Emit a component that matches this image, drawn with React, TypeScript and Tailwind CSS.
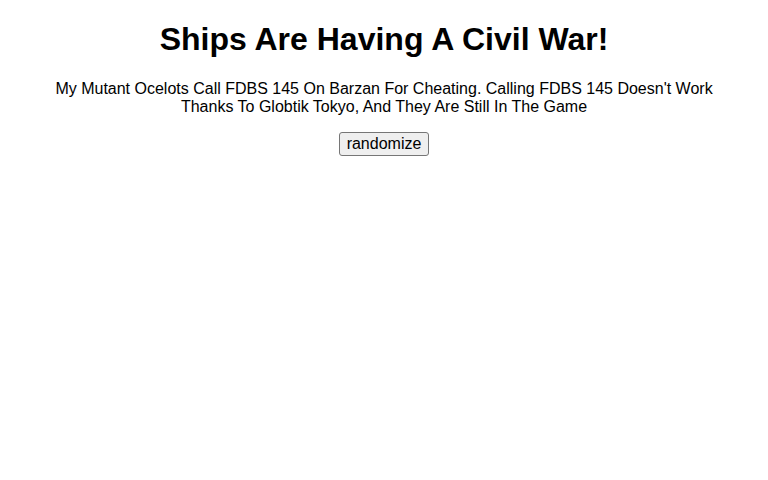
import React, { useState } from 'react';

const headlines = [
  {
    title: 'Ships Are Having A Civil War!',
    body: "My Mutant Ocelots Call FDBS 145 On Barzan For Cheating. Calling FDBS 145 Doesn't Work Thanks To Globtik Tokyo, And They Are Still In The Game",
  },
];

export default function App() {
  const [index, setIndex] = useState(0);
  const item = headlines[index];

  const randomize = () => {
    setIndex(Math.floor(Math.random() * headlines.length));
  };

  return (
    <div className="min-h-screen bg-white text-black text-center font-['Liberation_Sans',Arial,sans-serif] leading-[normal]">
      <div className="max-w-[690px] mx-auto">
        <h1 className="text-[32px] font-bold pt-[21.44px] pb-[21.44px]">{item.title}</h1>
        <p className="text-[16px] mb-4">{item.body}</p>
        <button
          onClick={randomize}
          className="text-[16px] bg-[#efefef] border border-[#767676] rounded-[3px] px-[7px] py-[2px] hover:bg-[#e5e5e5]"
        >
          randomize
        </button>
      </div>
    </div>
  );
}
